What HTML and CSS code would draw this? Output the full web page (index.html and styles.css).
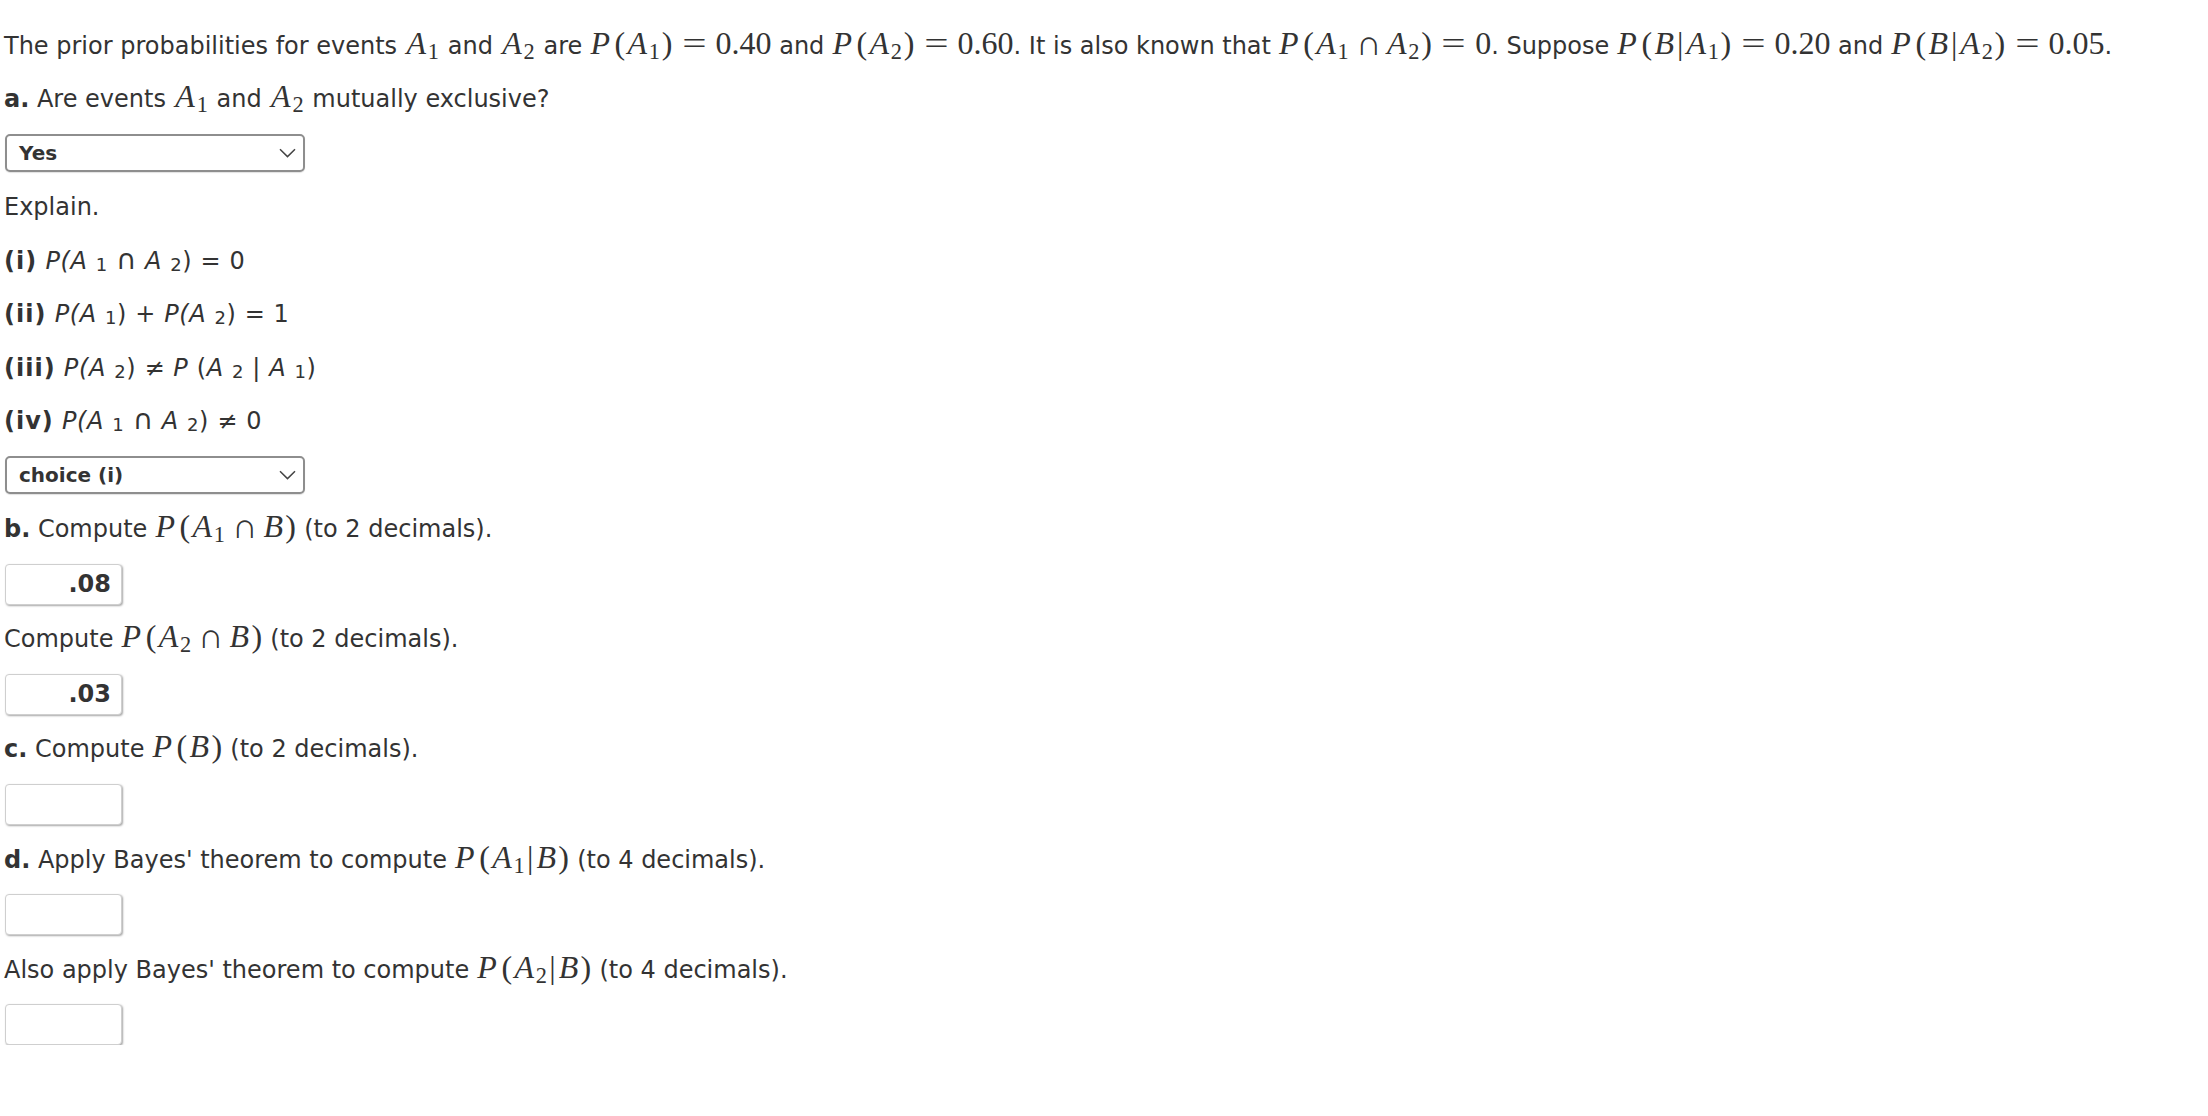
FILE: index.html
```html
<!DOCTYPE html>
<html lang="en">
<head>
<meta charset="utf-8">
<title>Bayes' theorem</title>
<link rel="stylesheet" href="styles.css">
</head>
<body>
<main class="page">
  <p class="line">The prior probabilities for events <span class="m"><span class="v vA">A</span><span class="sb">1</span></span> and <span class="m"><span class="v vA">A</span><span class="sb">2</span></span> are <span class="m"><span class="v vP">P</span><span class="o">(</span><span class="v vA">A</span><span class="sb">1</span><span class="o">)</span><span class="rel">=</span>0.40</span> and <span class="m"><span class="v vP">P</span><span class="o">(</span><span class="v vA">A</span><span class="sb">2</span><span class="o">)</span><span class="rel">=</span>0.60</span>. It is also known that <span class="m"><span class="v vP">P</span><span class="o">(</span><span class="v vA">A</span><span class="sb">1</span><span class="bin">∩</span><span class="v vA">A</span><span class="sb">2</span><span class="o">)</span><span class="rel">=</span>0</span>. Suppose <span class="m"><span class="v vP">P</span><span class="o">(</span><span class="v vB">B</span><span class="bar">|</span><span class="v vA">A</span><span class="sb">1</span><span class="o">)</span><span class="rel">=</span>0.20</span> and <span class="m"><span class="v vP">P</span><span class="o">(</span><span class="v vB">B</span><span class="bar">|</span><span class="v vA">A</span><span class="sb">2</span><span class="o">)</span><span class="rel">=</span>0.05</span>.</p>

  <p class="line"><b>a.</b> Are events <span class="m"><span class="v vA">A</span><span class="sb">1</span></span> and <span class="m"><span class="v vA">A</span><span class="sb">2</span></span> mutually exclusive?</p>

  <div class="select" role="combobox" aria-label="mutually exclusive">
    <span>Yes</span>
    <svg class="chev" width="17" height="10" viewBox="0 0 17 10"><path d="M1 1.2 L8.5 8.6 L16 1.2" fill="none" stroke="#444" stroke-width="1.5"/></svg>
  </div>

  <p class="line">Explain.</p>
  <p class="line item"><b class="lbl">(i)</b> <i>P(A</i> <span class="ss">1</span> <span class="cap">∩</span> <i>A</i> <span class="ss">2</span>) = 0</p>
  <p class="line item"><b class="lbl">(ii)</b> <i>P(A</i> <span class="ss">1</span>) + <i>P(A</i> <span class="ss">2</span>) = 1</p>
  <p class="line item"><b class="lbl">(iii)</b> <i>P(A</i> <span class="ss">2</span>) ≠ <i>P</i> (<i>A</i> <span class="ss">2</span> | <i>A</i> <span class="ss">1</span>)</p>
  <p class="line item"><b class="lbl">(iv)</b> <i>P(A</i> <span class="ss">1</span> <span class="cap">∩</span> <i>A</i> <span class="ss">2</span>) ≠ 0</p>

  <div class="select" role="combobox" aria-label="explanation">
    <span>choice (i)</span>
    <svg class="chev" width="17" height="10" viewBox="0 0 17 10"><path d="M1 1.2 L8.5 8.6 L16 1.2" fill="none" stroke="#444" stroke-width="1.5"/></svg>
  </div>

  <p class="line"><b>b.</b> Compute <span class="m"><span class="v vP">P</span><span class="o">(</span><span class="v vA">A</span><span class="sb">1</span><span class="bin">∩</span><span class="v vB">B</span><span class="o">)</span></span> (to 2 decimals).</p>
  <input class="answer" type="text" value=".08" aria-label="P(A1 and B)">

  <p class="line">Compute <span class="m"><span class="v vP">P</span><span class="o">(</span><span class="v vA">A</span><span class="sb">2</span><span class="bin">∩</span><span class="v vB">B</span><span class="o">)</span></span> (to 2 decimals).</p>
  <input class="answer" type="text" value=".03" aria-label="P(A2 and B)">

  <p class="line"><b>c.</b> Compute <span class="m"><span class="v vP">P</span><span class="o">(</span><span class="v vB">B</span><span class="o">)</span></span> (to 2 decimals).</p>
  <input class="answer" type="text" value="" aria-label="P(B)">

  <p class="line"><b>d.</b> Apply Bayes' theorem to compute <span class="m"><span class="v vP">P</span><span class="o">(</span><span class="v vA">A</span><span class="sb">1</span><span class="bar">|</span><span class="v vB">B</span><span class="o">)</span></span> (to 4 decimals).</p>
  <input class="answer" type="text" value="" aria-label="P(A1 given B)">

  <p class="line">Also apply Bayes' theorem to compute <span class="m"><span class="v vP">P</span><span class="o">(</span><span class="v vA">A</span><span class="sb">2</span><span class="bar">|</span><span class="v vB">B</span><span class="o">)</span></span> (to 4 decimals).</p>
  <input class="answer" type="text" value="" aria-label="P(A2 given B)">
</main>
</body>
</html>
```

FILE: styles.css
```css
html, body {
  margin: 0;
  background: #ffffff;
}

body {
  color: #333333;
  font-family: "DejaVu Sans", Verdana, sans-serif;
  font-size: 24px;
}

.page {
  display: flex;
  flex-direction: column;
  align-items: flex-start;
  gap: 15.6px;
  padding: 26.7px 0 0 4px;
}

.line {
  margin: 0;
  height: 38px;
  line-height: 38px;
  white-space: nowrap;
}

.line b {
  font-weight: bold;
}

.line i {
  font-style: oblique;
}

/* explanation choices */
.item {
  letter-spacing: 0.6px;
}

.lbl {
  letter-spacing: 1px;
}

.ss {
  font-size: 0.75em;
  line-height: 1;
  vertical-align: -2px;
}

.cap {
  display: inline-block;
  font-size: 1.15em;
  line-height: 1;
}

/* KaTeX-like math */
.m {
  font-family: "Liberation Serif", "DejaVu Serif", serif;
  font-size: 32px;
  line-height: 1;
  white-space: nowrap;
  letter-spacing: 0;
}

.v {
  font-style: italic;
  display: inline-block;
  text-align: center;
}

.vP {
  width: 0.64em;
  margin-right: 0.11em;
}

.vA {
  width: 0.72em;
}

.vB {
  width: 0.72em;
}

.o {
  display: inline-block;
  width: 0.37em;
  text-align: center;
}

.sb {
  font-size: 0.7em;
  vertical-align: -0.22em;
  margin-right: 0.05em;
}

.rel {
  display: inline-block;
  width: 0.778em;
  margin: 0 0.2778em;
  text-align: center;
  transform: scaleX(1.35);
}

.bin {
  display: inline-block;
  width: 0.667em;
  margin: 0 0.2222em;
  text-align: center;
  transform: scale(1.1);
}

.bar {
  display: inline-block;
  width: 0.278em;
  text-align: center;
}

/* dropdowns */
.select {
  box-sizing: border-box;
  display: flex;
  align-items: center;
  justify-content: space-between;
  width: 300px;
  height: 38.5px;
  margin-left: 1px;
  padding: 0 7px 0 12px;
  border: 2px solid #8e8e8e;
  border-radius: 5px;
  background: #ffffff;
  box-shadow: 0 1px 1px rgba(0, 0, 0, 0.12);
  color: #333333;
  font-size: 20px;
  font-weight: bold;
}

.chev {
  display: block;
}

/* answer boxes */
.answer {
  box-sizing: border-box;
  width: 117px;
  height: 41px;
  margin: 0 0 0 1px;
  padding: 0 10px;
  border: 1px solid #cfcfcf;
  border-radius: 4px;
  background: #ffffff;
  box-shadow: 1px 1px 2px rgba(0, 0, 0, 0.35);
  color: #333333;
  font-family: "DejaVu Sans", Verdana, sans-serif;
  font-size: 24px;
  font-weight: bold;
  text-align: right;
  outline: none;
}
```
